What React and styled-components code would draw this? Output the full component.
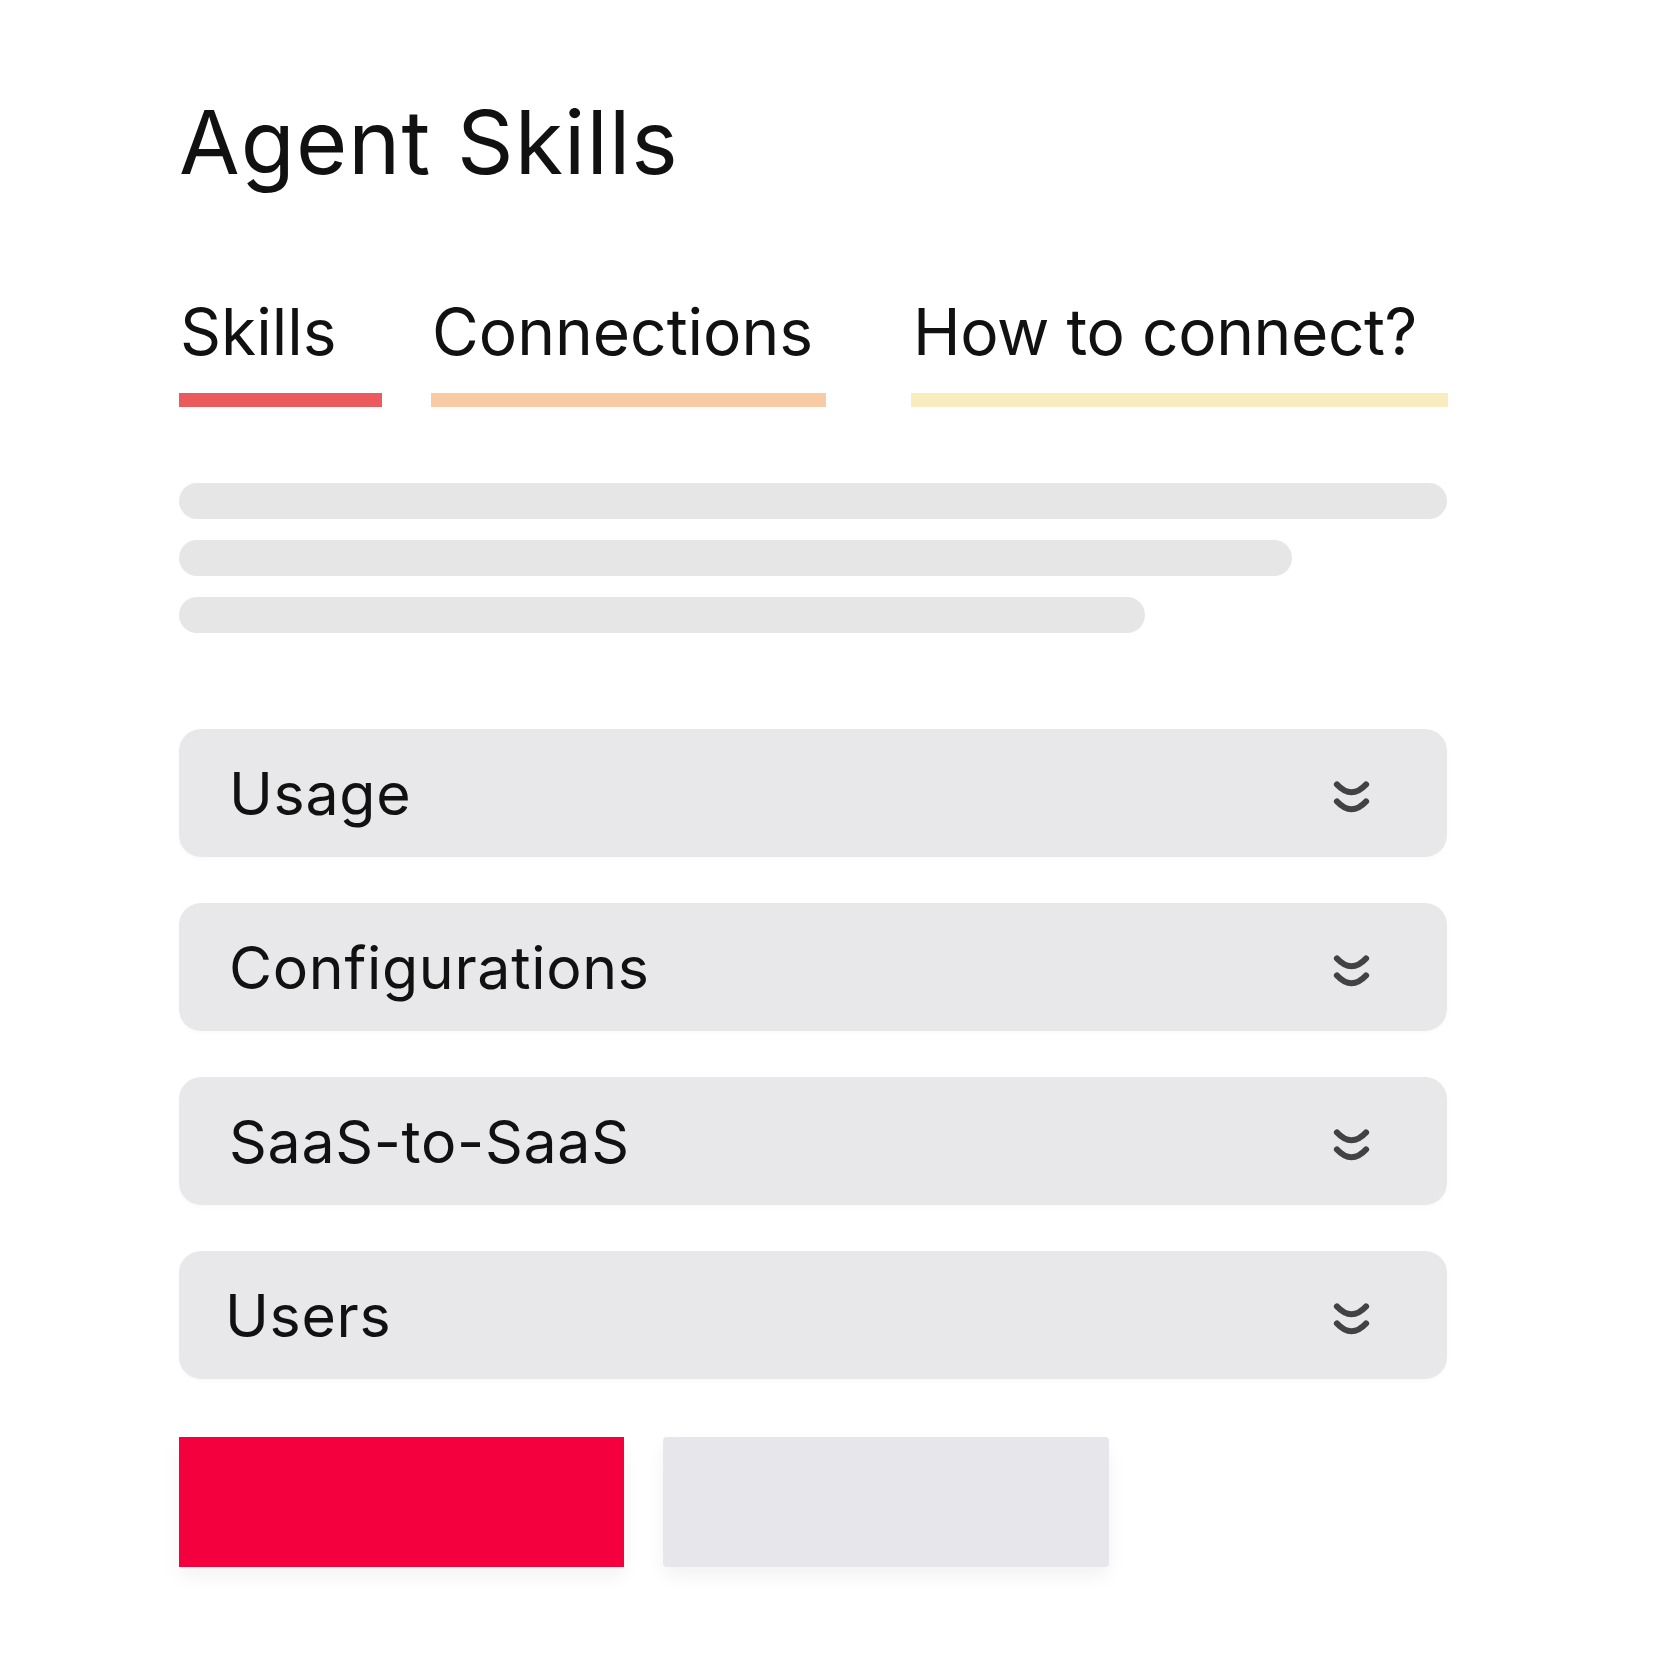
import React from 'react'
import styled, { createGlobalStyle } from 'styled-components'

const GlobalStyle = createGlobalStyle`
    html, body {
        margin: 0;
        padding: 0;
        background: #ffffff;
    }
    body {
        font-family: Inter, "Noto Sans", "Liberation Sans", sans-serif;
        color: #111111;
    }
`

const Page = styled.div`
    width: 1680px;
    min-height: 1677px;
    box-sizing: border-box;
    padding: 98px 0 0 179px;
    display: flex;
    flex-direction: column;
`

const Title = styled.h1`
    margin: 0;
    font-size: 88px;
    line-height: 1;
    font-weight: 400;
    letter-spacing: 1.1px;
    color: #111111;
`

const Tabs = styled.div`
    display: flex;
    margin-top: 114px;
`

const Tab = styled.div`
    display: flex;
    flex-direction: column;
    width: ${p => p.width}px;
    margin-left: ${p => p.offset || 0}px;
`

const TabLabel = styled.span`
    font-size: 64px;
    line-height: 1;
    font-weight: 400;
    padding-left: ${p => p.inset || 0}px;
    letter-spacing: ${p => p.tight ? -0.4 : 0}px;
    color: #111111;
    white-space: nowrap;
`

const TabBar = styled.div`
    height: 14px;
    margin-top: 29px;
    background: ${p => p.color};
`

const Skeleton = styled.div`
    display: flex;
    flex-direction: column;
    gap: 21px;
    margin-top: 76px;
`

const SkeletonLine = styled.div`
    height: 36px;
    width: ${p => p.width}px;
    border-radius: 18px;
    background: #e6e6e6;
`

const Accordion = styled.div`
    display: flex;
    flex-direction: column;
    gap: 46px;
    margin-top: 96px;
    width: 1268px;
`

const Item = styled.div`
    height: 128px;
    box-sizing: border-box;
    border-radius: 22px;
    background: #e8e8ea;
    display: flex;
    align-items: center;
    justify-content: space-between;
    padding: 0 77px 0 ${p => p.inset || 50}px;
    box-shadow: 0 2px 4px rgba(0, 0, 0, 0.025);
`

const ItemLabel = styled.span`
    font-size: 59px;
    line-height: 1;
    font-weight: 400;
    letter-spacing: 0.7px;
    color: #111111;
`

const Chevron = styled.svg`
    width: 37px;
    height: 38px;
    margin-top: 12px;
    flex-shrink: 0;
`

const Actions = styled.div`
    display: flex;
    gap: 39px;
    margin-top: 58px;
`

const Button = styled.div`
    width: ${p => p.width}px;
    height: 130px;
    background: ${p => p.primary ? '#f5003f' : '#e7e7eb'};
    border-radius: ${p => p.primary ? 0 : 4}px;
    box-shadow: 0 10px 18px rgba(0, 0, 0, 0.05);
`

const DoubleChevron = () => (
    <Chevron viewBox="0 0 37 38" fill="none" stroke="#424242" strokeWidth="6.2" strokeLinecap="round">
        <path d="M4 4.5 Q18.5 20 33 4.5" />
        <path d="M4 21.5 Q18.5 37 33 21.5" />
    </Chevron>
)

const tabs = [
    { label: 'Skills', width: 203, color: '#eb5a5c', offset: 0, inset: 1 },
    { label: 'Connections', width: 395, color: '#f8cba5', offset: 49, inset: 1 },
    { label: 'How to connect?', width: 537, color: '#f9edc0', offset: 85, inset: 2, tight: true },
]

const sections = ['Usage', 'Configurations', 'SaaS-to-SaaS', 'Users']

const App = () => {
    return (
        <Page>
            <GlobalStyle/>
            <Title>Agent Skills</Title>
            <Tabs>
                {tabs.map(tab => (
                    <Tab key={tab.label} width={tab.width} offset={tab.offset}>
                        <TabLabel inset={tab.inset} tight={tab.tight}>{tab.label}</TabLabel>
                        <TabBar color={tab.color}/>
                    </Tab>
                ))}
            </Tabs>
            <Skeleton>
                <SkeletonLine width={1268}/>
                <SkeletonLine width={1113}/>
                <SkeletonLine width={966}/>
            </Skeleton>
            <Accordion>
                {sections.map(name => (
                    <Item key={name} inset={name === 'Users' ? 46 : 50}>
                        <ItemLabel>{name}</ItemLabel>
                        <DoubleChevron/>
                    </Item>
                ))}
            </Accordion>
            <Actions>
                <Button primary width={445}/>
                <Button width={446}/>
            </Actions>
        </Page>
    )
}

export default App
